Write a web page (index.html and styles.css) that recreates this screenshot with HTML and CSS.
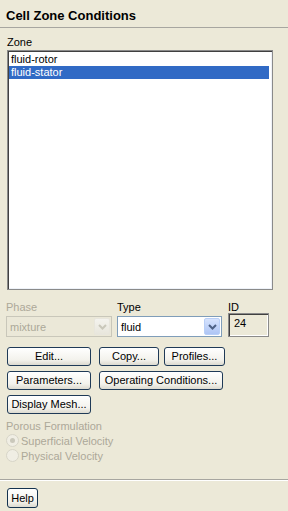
FILE: index.html
```html
<!DOCTYPE html>
<html>
<head>
<meta charset="utf-8">
<link rel="stylesheet" href="styles.css">
</head>
<body>
<div class="panel">
  <div class="header"><h1 class="title">Cell Zone Conditions</h1></div>
  <div class="zone">
    <div class="label">Zone</div>
    <div class="listbox">
      <div class="item">fluid-rotor</div>
      <div class="item selected">fluid-stator</div>
    </div>
  </div>
  <div class="fields">
    <div class="field phase">
      <div class="label disabled">Phase</div>
      <div class="combo combo-disabled"><span class="combo-text">mixture</span><span class="arrow"><svg width="9" height="6" viewBox="0 0 9 6"><path d="M1 1 L4.5 4.5 L8 1" fill="none" stroke="#c9c7ba" stroke-width="2"/></svg></span></div>
    </div>
    <div class="field type">
      <div class="label">Type</div>
      <div class="combo"><span class="combo-text">fluid</span><span class="arrow"><svg width="9" height="6" viewBox="0 0 9 6"><path d="M1 1 L4.5 4.5 L8 1" fill="none" stroke="#4d6185" stroke-width="2"/></svg></span></div>
    </div>
    <div class="field idf">
      <div class="label">ID</div>
      <div class="idbox">24</div>
    </div>
  </div>
  <div class="buttons">
    <div class="btn-row">
      <button class="btn w83">Edit...</button>
      <button class="btn w60">Copy...</button>
      <button class="btn w61">Profiles...</button>
    </div>
    <div class="btn-row">
      <button class="btn w83">Parameters...</button>
      <button class="btn w124">Operating Conditions...</button>
    </div>
    <div class="btn-row">
      <button class="btn w83">Display Mesh...</button>
    </div>
  </div>
  <div class="porous">
    <div class="label disabled">Porous Formulation</div>
    <div class="radio disabled"><span class="circle checked"></span>Superficial Velocity</div>
    <div class="radio disabled"><span class="circle"></span>Physical Velocity</div>
  </div>
  <div class="footer">
    <button class="btn help">Help</button>
  </div>
</div>
</body>
</html>
```

FILE: styles.css
```css
* { box-sizing: border-box; }
html, body { margin: 0; padding: 0; }
body {
  background: #ece9d8;
  font-family: "Liberation Sans", Arial, sans-serif;
  font-size: 11px;
  color: #000;
  width: 288px;
  height: 511px;
  overflow: hidden;
}
.panel { display: flex; flex-direction: column; height: 511px; }
.header {
  height: 28px;
  border-bottom: 1px solid #a7a6a0;
  padding: 8px 0 0 6px;
}
.title {
  margin: 0;
  font-family: "Liberation Sans", Arial, sans-serif;
  font-size: 13px;
  font-weight: bold;
  line-height: 16px;
}
.label { line-height: 13px; height: 13px; }
.disabled { color: #aca899; }
.zone { padding: 8px 0 0 7px; }
.zone .label { margin-bottom: 1px; }
.listbox {
  width: 266px;
  height: 240px;
  background: #fff;
  border: 1px solid #8a8a8a;
  box-shadow: inset 1px 1px 0 #404040, inset -1px -1px 0 #eef2f8;
  padding: 2px 3px 0 1px;
}
.item {
  height: 13px;
  line-height: 13px;
  padding-left: 2px;
}
.item.selected { background: #316ac5; color: #fff; }
.fields {
  display: flex;
  padding: 11px 0 0 6px;
}
.phase { width: 111px; }
.type { width: 111px; }
.phase .combo { width: 106px; }
.type .combo { width: 105px; }
.field .combo { margin-top: 2px; }
.combo {
  height: 21px;
  border: 1px solid #7f9db9;
  background: #fff;
  display: flex;
  align-items: center;
  justify-content: space-between;
  padding: 1px 1px 1px 3px;
}
.combo-text { line-height: 13px; padding-top: 1px; }
.combo .arrow {
  width: 16px;
  height: 17px;
  border: 1px solid #b9cff7;
  border-radius: 2px;
  background: linear-gradient(#d6e3fd, #aec5f5);
  display: flex;
  align-items: center;
  justify-content: center;
}
.combo-disabled { border-color: #c9c7ba; background: #ebe8d8; }
.combo-disabled .combo-text { color: #aca899; }
.combo-disabled .arrow { border-color: #e8e6dd; background: linear-gradient(#f4f3ee, #e8e6dc); }
.idf .idbox { margin-top: -1px; }
.idbox {
  width: 41px;
  height: 24px;
  border: 1px solid #8a8a8a;
  box-shadow: inset 1px 1px 0 #404040, inset -1px -1px 0 #fff;
  padding: 3px 0 0 5px;
  line-height: 13px;
}
.buttons {
  padding: 10px 0 0 7px;
  display: flex;
  flex-direction: column;
  gap: 5px;
}
.btn-row { display: flex; gap: 8px; }
.btn-row .btn.w61 { margin-left: -3px; }
.btn {
  height: 19px;
  border: 1px solid #1f3a57;
  border-radius: 3px;
  background: linear-gradient(#ffffff, #f3f2ec 70%, #dcdad0);
  font-family: "Liberation Sans", Arial, sans-serif;
  font-size: 11px;
  color: #000;
  padding: 0;
  line-height: 15px;
  text-align: center;
}
.w83 { width: 84px; }
.w60 { width: 60px; }
.w61 { width: 61px; }
.w124 { width: 124px; }
.porous { padding: 6px 0 0 6px; }
.radio {
  display: flex;
  align-items: center;
  height: 15px;
}
.circle {
  width: 13px;
  height: 13px;
  border-radius: 50%;
  border: 1px solid #d7d5c8;
  background: #f0eee4;
  margin-right: 2px;
  display: flex;
  align-items: center;
  justify-content: center;
}
.circle.checked::after {
  content: "";
  width: 5px;
  height: 5px;
  border-radius: 50%;
  background: #cac8bb;
}
.footer {
  margin-top: auto;
  border-top: 1px solid #a7a6a0;
  box-shadow: inset 0 1px 0 #fff;
  height: 32px;
  padding: 8px 0 0 7px;
}
.help { width: 31px; height: 20px; border-color: #14324f; }
```
